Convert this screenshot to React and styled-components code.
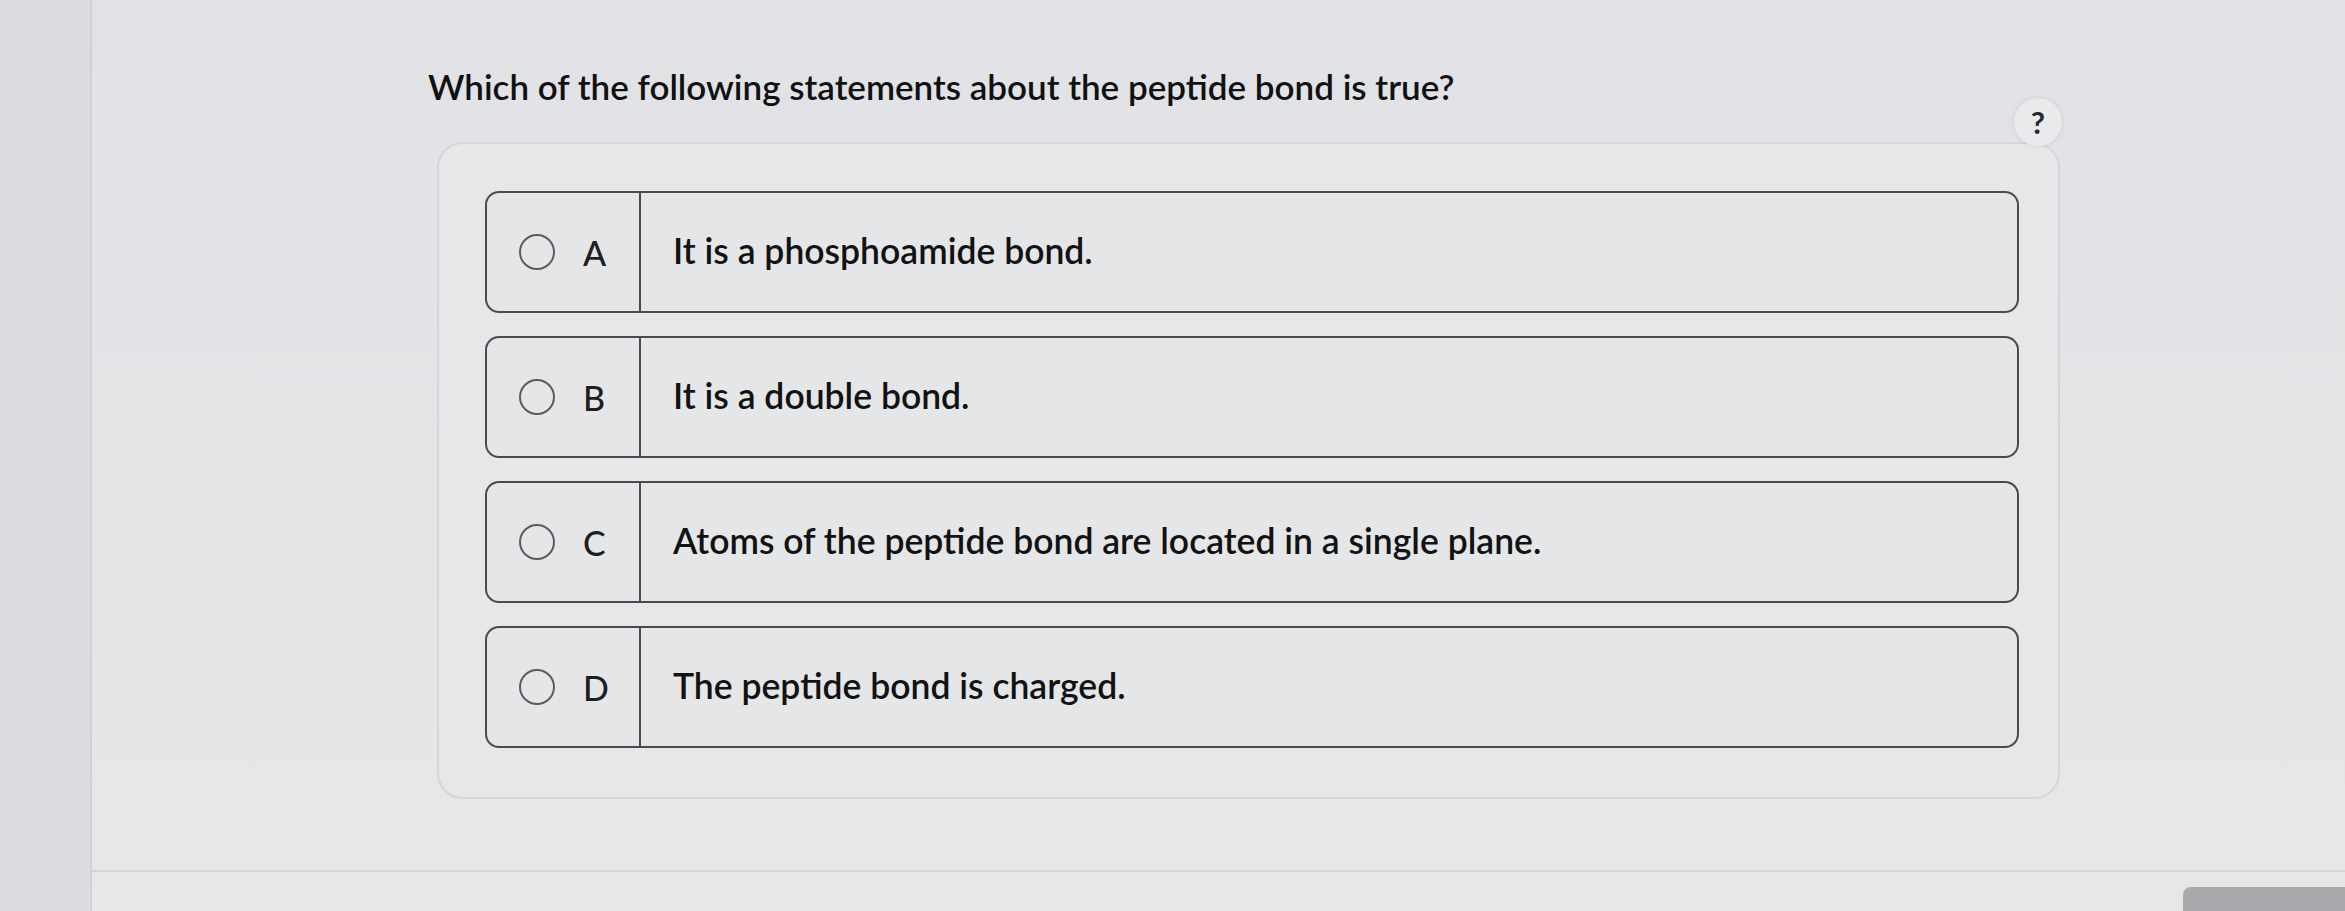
import React from "react";
import styled, { createGlobalStyle } from "styled-components";

const GlobalStyle = createGlobalStyle`
  html, body {
    margin: 0;
    padding: 0;
  }
  body {
    background: linear-gradient(180deg, #e1e2e5 0%, #e4e5e7 60%, #e6e7e7 100%);
    font-family: Lato, "Open Sans", "Liberation Sans", sans-serif;
    color: #151515;
  }
`;

const Page = styled.div`
  display: flex;
  height: 911px;
  overflow: hidden;
`;

const Sidebar = styled.div`
  width: 90px;
  flex-shrink: 0;
  background: #dcdde0;
  border-right: 2px solid #d2d3d7;
`;

const Main = styled.div`
  flex: 1;
  display: flex;
  flex-direction: column;
  padding: 66px 0 0 336px;
`;

const Question = styled.h1`
  margin: 0;
  font-size: 35px;
  line-height: 40px;
  font-weight: 600;
  color: #111;
`;

const Card = styled.div`
  position: relative;
  width: 1623px;
  margin: 36px 0 0 9px;
  padding: 47px 39px 49px 46px;
  box-sizing: border-box;
  display: flex;
  flex-direction: column;
  gap: 23px;
  background: #e6e7e9;
  border: 2px solid #d5d6d9;
  border-radius: 26px;
`;

const HelpBadge = styled.div`
  position: absolute;
  top: -46px;
  right: -4px;
  width: 48px;
  height: 48px;
  border-radius: 50%;
  display: flex;
  align-items: center;
  justify-content: center;
  background: #e9eaec;
  box-shadow: 0 0 5px rgba(0, 0, 0, 0.1);
  font-size: 31px;
  font-weight: 700;
  color: #262a31;
`;

const Option = styled.div`
  display: flex;
  height: 122px;
  box-sizing: border-box;
  border: 2px solid #4a4b4f;
  border-radius: 14px;
  background: #e5e6e8;
  cursor: pointer;
`;

const OptionKey = styled.div`
  width: 154px;
  flex-shrink: 0;
  display: flex;
  align-items: center;
  padding-left: 32px;
  box-sizing: border-box;
  border-right: 2px solid #4a4b4f;
`;

const Radio = styled.span`
  width: 36px;
  height: 36px;
  box-sizing: border-box;
  border: 2.5px solid #5b5c60;
  border-radius: 50%;
`;

const Letter = styled.span`
  margin-left: 28px;
  font-size: 34px;
  font-weight: 500;
  color: #1e1e1e;
`;

const OptionText = styled.div`
  flex: 1;
  display: flex;
  align-items: center;
  padding-left: 32px;
  padding-bottom: 4px;
  font-size: 35.5px;
  font-weight: 600;
  color: #121212;
`;

const Footer = styled.div`
  margin-top: auto;
  margin-left: -336px;
  height: 39px;
  border-top: 2px solid #d3d4d6;
  display: flex;
  justify-content: flex-end;
  align-items: flex-end;
`;

const NextButton = styled.div`
  width: 170px;
  height: 24px;
  margin-right: -8px;
  background: #a7a9ac;
  border-radius: 8px 0 0 0;
`;

const options = [
  { key: "A", text: "It is a phosphoamide bond." },
  { key: "B", text: "It is a double bond." },
  { key: "C", text: "Atoms of the peptide bond are located in a single plane." },
  { key: "D", text: "The peptide bond is charged." },
];

export default function App() {
  return (
    <>
      <GlobalStyle />
      <Page>
        <Sidebar />
        <Main>
          <Question>Which of the following statements about the peptide bond is true?</Question>
          <Card>
            <HelpBadge>?</HelpBadge>
            {options.map((o) => (
              <Option key={o.key}>
                <OptionKey>
                  <Radio />
                  <Letter>{o.key}</Letter>
                </OptionKey>
                <OptionText>{o.text}</OptionText>
              </Option>
            ))}
          </Card>
          <Footer>
            <NextButton />
          </Footer>
        </Main>
      </Page>
    </>
  );
}
